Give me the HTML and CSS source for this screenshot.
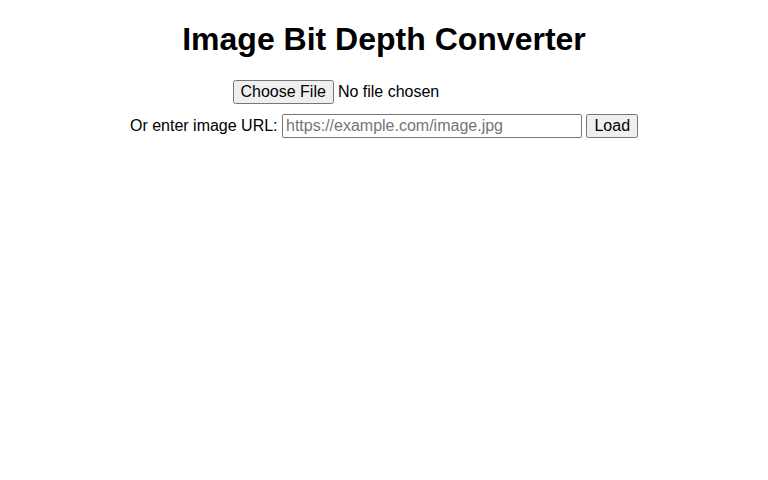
FILE: index.html
```html
<!DOCTYPE html>
<html lang="en">
<head>
    <meta charset="UTF-8">
    <meta name="viewport" content="width=device-width, initial-scale=1.0">
    <title>Image Bit Depth Converter</title>
    <link rel="stylesheet" href="styles.css">
</head>
<body>
    <h1>Image Bit Depth Converter</h1>
    <div class="controls">
        <input type="file" id="fileInput" accept="image/*">
        <div class="url-row">
            <label for="urlInput">Or enter image URL:</label>
            <input type="text" id="urlInput" placeholder="https://example.com/image.jpg">
            <button id="loadBtn">Load</button>
        </div>
    </div>
    <div id="output">
    </div>
</body>
</html>
```

FILE: styles.css
```css
body {
    margin: 0;
    padding: 0 20px;
    font-family: Arial, "Liberation Sans", sans-serif;
    text-align: center;
}
input, button {
    font: inherit;
}
.controls {
    margin-bottom: 20px;
}
.url-row {
    margin-top: 10px;
}
#urlInput {
    width: 300px;
    box-sizing: border-box;
}
```
